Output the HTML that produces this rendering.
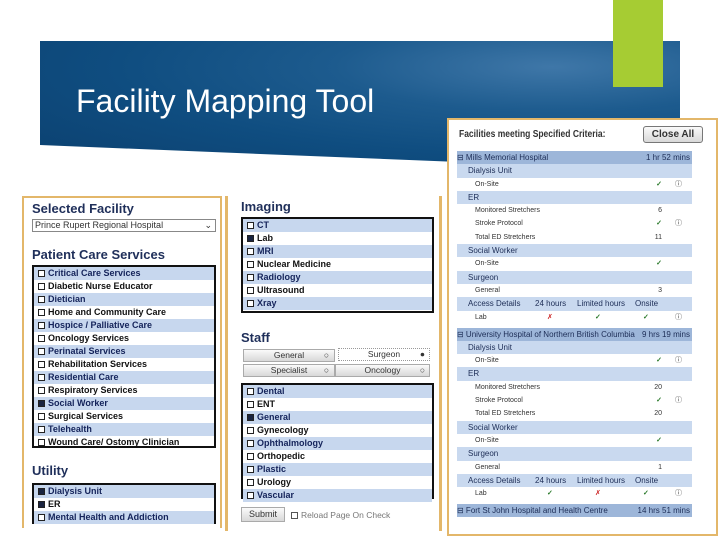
<!DOCTYPE html>
<html><head><meta charset="utf-8"><style>
*{margin:0;padding:0;box-sizing:border-box}
body{width:720px;height:540px;background:#fff;position:relative;overflow:hidden;font-family:"Liberation Sans",sans-serif}
.abs{position:absolute}
.banner{left:40px;top:41px;width:640px;height:130px;background:radial-gradient(ellipse at 80% 20%,#3f77a8 0%,#1d5b8e 30%,#0f4d80 60%,#0b3f6e 100%);clip-path:polygon(0 0,100% 0,100% 100%,0 80%)}
.green{left:613px;top:0;width:50px;height:87px;background:#a6cc33}
.title{left:76px;top:83px;color:#fff;font-size:32px}
.panel{border:2px solid #e3b76a;background:#fff}
h3{font-size:13px;color:#1f2f5a;font-weight:bold;position:absolute}
.list{position:absolute;border:2px solid #111;background:#fff}
.list div{height:13px;font-size:9px;line-height:13px;padding-left:4px;color:#14235a;font-weight:bold;white-space:nowrap}
.list div:nth-child(odd){background:#c7d7ee}
.list div:nth-child(even){color:#111}
.cb{display:inline-block;width:7px;height:7px;border:1px solid #222;margin-right:3px;vertical-align:-1px;background:#fff}
.cb.on{background:#1a2440}
.sel{left:32px;top:219px;width:184px;height:13px;border:1px solid #888;font-size:9px;line-height:11px;padding-left:2px;color:#333}
.btn{position:absolute;height:13px;border:1px solid #aaa;background:linear-gradient(#fafafa,#d8d8d8);font-size:8.5px;line-height:11px;text-align:center;color:#333}
.rt{position:absolute;left:457px;width:235px}
.r{height:13.3px;font-size:7px;line-height:13px;color:#333;position:relative;white-space:nowrap}
.h{background:#9db6d9;color:#1c2c55;font-size:8px}
.l{background:#c9d9ef;color:#1c2c55;font-size:8px;padding-left:11px}
.w{padding-left:18px}
.rv{position:absolute;right:30px;top:0}
.ri{position:absolute;right:10px;top:0}
.ck{color:#2a7a2a;font-weight:bold}
.x{color:#c22}
</style></head><body>
<div class="abs banner"></div>
<div class="abs green"></div>
<div class="abs title">Facility Mapping Tool</div>

<div class="abs panel" style="left:22px;top:196px;width:200px;height:332px;border-bottom:none"></div>
<h3 style="left:32px;top:201px">Selected Facility</h3>
<div class="abs sel">Prince Rupert Regional Hospital<span style="position:absolute;right:3px;top:0">⌄</span></div>
<h3 style="left:32px;top:247px">Patient Care Services</h3>
<div class="list" style="left:32px;top:265px;width:184px;height:183px">
<div><span class="cb"></span>Critical Care Services</div>
<div><span class="cb"></span>Diabetic Nurse Educator</div>
<div><span class="cb"></span>Dietician</div>
<div><span class="cb"></span>Home and Community Care</div>
<div><span class="cb"></span>Hospice / Palliative Care</div>
<div><span class="cb"></span>Oncology Services</div>
<div><span class="cb"></span>Perinatal Services</div>
<div><span class="cb"></span>Rehabilitation Services</div>
<div><span class="cb"></span>Residential Care</div>
<div><span class="cb"></span>Respiratory Services</div>
<div><span class="cb on"></span>Social Worker</div>
<div><span class="cb"></span>Surgical Services</div>
<div><span class="cb"></span>Telehealth</div>
<div><span class="cb"></span>Wound Care/ Ostomy Clinician</div>
</div>
<h3 style="left:32px;top:463px">Utility</h3>
<div class="list" style="left:32px;top:483px;width:184px;height:41px">
<div><span class="cb on"></span>Dialysis Unit</div>
<div><span class="cb on"></span>ER</div>
<div><span class="cb"></span>Mental Health and Addiction</div>
</div>
<div class="abs" style="left:225px;top:196px;width:3px;height:335px;background:#e3b76a"></div>

<h3 style="left:241px;top:199px">Imaging</h3>
<div class="list" style="left:241px;top:217px;width:193px;height:96px">
<div><span class="cb"></span>CT</div>
<div><span class="cb on"></span>Lab</div>
<div><span class="cb"></span>MRI</div>
<div><span class="cb"></span>Nuclear Medicine</div>
<div><span class="cb"></span>Radiology</div>
<div><span class="cb"></span>Ultrasound</div>
<div><span class="cb"></span>Xray</div>
</div>
<h3 style="left:241px;top:330px">Staff</h3>
<div class="btn" style="left:243px;top:349px;width:92px">General<span style="position:absolute;right:5px">○</span></div>
<div class="btn" style="left:338px;top:348px;width:92px;background:#fff;border:1px dotted #999">Surgeon<span style="position:absolute;right:4px">●</span></div>
<div class="btn" style="left:243px;top:364px;width:92px">Specialist<span style="position:absolute;right:5px">○</span></div>
<div class="btn" style="left:335px;top:364px;width:95px">Oncology<span style="position:absolute;right:4px">○</span></div>
<div class="list" style="left:241px;top:383px;width:193px;height:116px">
<div><span class="cb"></span>Dental</div>
<div><span class="cb"></span>ENT</div>
<div><span class="cb on"></span>General</div>
<div><span class="cb"></span>Gynecology</div>
<div><span class="cb"></span>Ophthalmology</div>
<div><span class="cb"></span>Orthopedic</div>
<div><span class="cb"></span>Plastic</div>
<div><span class="cb"></span>Urology</div>
<div><span class="cb"></span>Vascular</div>
</div>
<div class="btn" style="left:241px;top:507px;width:44px;height:15px;line-height:13px;font-size:9px">Submit</div>
<div class="abs" style="left:291px;top:510px;font-size:8.5px;color:#777"><span class="cb" style="border-color:#555"></span>Reload Page On Check</div>
<div class="abs" style="left:439px;top:196px;width:3px;height:335px;background:#e3b76a"></div>

<div class="abs panel" style="left:447px;top:118px;width:271px;height:418px"></div>
<div class="abs" style="left:459px;top:129px;font-size:10px;font-weight:bold;color:#333;transform:scaleX(0.85);transform-origin:left">Facilities meeting Specified Criteria:</div>
<div class="btn" style="left:643px;top:126px;width:60px;height:17px;line-height:15px;font-size:10px;font-weight:bold;border-radius:3px;border-color:#777">Close All</div>
<div class="rt" style="top:151px">
<div class="r h">⊟ Mills Memorial Hospital<span class="ri" style="right:2px">1 hr 52 mins</span></div>
<div class="r l">Dialysis Unit</div>
<div class="r w">On-Site<span class="rv ck">✓</span><span class="ri">ⓘ</span></div>
<div class="r l">ER</div>
<div class="r w">Monitored Stretchers<span class="rv">6</span></div>
<div class="r w">Stroke Protocol<span class="rv ck">✓</span><span class="ri">ⓘ</span></div>
<div class="r w">Total ED Stretchers<span class="rv">11</span></div>
<div class="r l">Social Worker</div>
<div class="r w">On-Site<span class="rv ck">✓</span></div>
<div class="r l">Surgeon</div>
<div class="r w">General<span class="rv">3</span></div>
<div class="r l">Access Details<span style="position:absolute;left:78px">24 hours</span><span style="position:absolute;left:120px">Limited hours</span><span style="position:absolute;left:178px">Onsite</span></div>
<div class="r w" style="height:17px">Lab<span style="position:absolute;left:90px" class="x">✗</span><span style="position:absolute;left:138px" class="ck">✓</span><span style="position:absolute;left:186px" class="ck">✓</span><span class="ri">ⓘ</span></div>
<div class="r h">⊟ University Hospital of Northern British Columbia<span class="ri" style="right:2px">9 hrs 19 mins</span></div>
<div class="r l">Dialysis Unit</div>
<div class="r w">On-Site<span class="rv ck">✓</span><span class="ri">ⓘ</span></div>
<div class="r l">ER</div>
<div class="r w">Monitored Stretchers<span class="rv">20</span></div>
<div class="r w">Stroke Protocol<span class="rv ck">✓</span><span class="ri">ⓘ</span></div>
<div class="r w">Total ED Stretchers<span class="rv">20</span></div>
<div class="r l">Social Worker</div>
<div class="r w">On-Site<span class="rv ck">✓</span></div>
<div class="r l">Surgeon</div>
<div class="r w">General<span class="rv">1</span></div>
<div class="r l">Access Details<span style="position:absolute;left:78px">24 hours</span><span style="position:absolute;left:120px">Limited hours</span><span style="position:absolute;left:178px">Onsite</span></div>
<div class="r w" style="height:17px">Lab<span style="position:absolute;left:90px" class="ck">✓</span><span style="position:absolute;left:138px" class="x">✗</span><span style="position:absolute;left:186px" class="ck">✓</span><span class="ri">ⓘ</span></div>
<div class="r h">⊟ Fort St John Hospital and Health Centre<span class="ri" style="right:2px">14 hrs 51 mins</span></div>
</div>
</body></html>
